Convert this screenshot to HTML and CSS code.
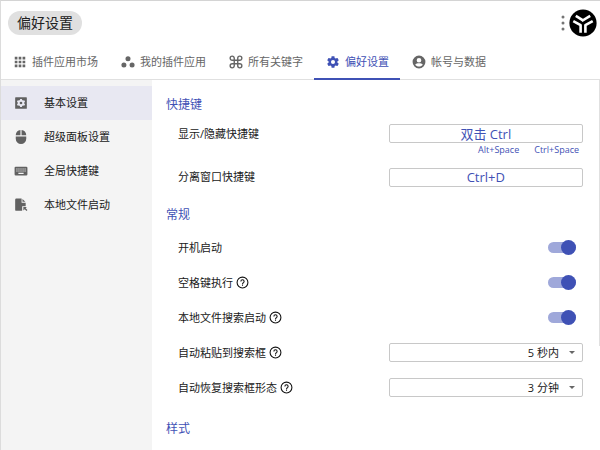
FILE: index.html
```html
<!DOCTYPE html>
<html lang="zh-CN">
<head>
  <meta charset="UTF-8" />
  <meta name="viewport" content="width=device-width, initial-scale=1.0" />
  <title>偏好设置</title>
  <link rel="stylesheet" href="styles.css">
</head>
<body>
  <header class="topbar">
    <h1 class="title">偏好设置</h1>
    <div class="topbar-right">
      <button class="more" aria-label="更多">
        <svg viewBox="0 0 4 16" width="4" height="16" fill="#757575"><circle cx="2" cy="2" r="1.5"/><circle cx="2" cy="8" r="1.5"/><circle cx="2" cy="14" r="1.5"/></svg>
      </button>
      <svg class="logo" viewBox="0 0 28 28" width="28" height="28">
        <circle cx="14" cy="14" r="13.6" fill="#000"/>
        <g stroke="#fff" stroke-width="2.6" fill="none" stroke-linejoin="round">
          <path d="M4.300 12.200L11.600 16.200V23.800"/>
          <path d="M6.800 6.800L14 11.300"/>
          <path d="M12.800 12L21.200 6.800"/>
          <path d="M23.700 12.200L16.400 16.200V23.800"/>
        </g>
      </svg>
    </div>
  </header>

  <nav class="tabs">
    <button class="tab">
      <svg class="icon" viewBox="0 0 24 24"><path d="M3 3h4.600v4.600H3zM9.700 3h4.600v4.600H9.700zM16.400 3H21v4.600h-4.600zM3 9.700h4.600v4.600H3zM9.700 9.700h4.600v4.600H9.700zM16.400 9.700H21v4.600h-4.600zM3 16.400h4.600V21H3zM9.700 16.400h4.600V21H9.700zM16.400 16.400H21V21h-4.600z"/></svg>
      插件应用市场
    </button>
    <button class="tab">
      <svg class="icon" viewBox="0 0 24 24"><circle cx="12" cy="6.500" r="4.300"/><circle cx="5" cy="17" r="4.300"/><circle cx="19" cy="17" r="4.300"/></svg>
      我的插件应用
    </button>
    <button class="tab">
      <svg class="icon" viewBox="0 0 24 24"><path fill="none" stroke="currentColor" stroke-width="2.400" d="M9 9h6v6H9zM9 9V5.500A3.500 3.500 0 1 0 5.500 9zM15 9h3.500A3.500 3.500 0 1 0 15 5.500zM15 15v3.500a3.500 3.500 0 1 0 3.500-3.500zM9 15H5.500A3.500 3.500 0 1 0 9 18.500z"/></svg>
      所有关键字
    </button>
    <button class="tab active">
      <svg class="icon" viewBox="0 0 24 24"><path d="M19.430 12.980c.040-.320.070-.640.070-.980s-.030-.660-.070-.980l2.110-1.650c.190-.150.240-.420.120-.640l-2-3.460c-.120-.220-.390-.300-.610-.220l-2.490 1c-.520-.400-1.080-.730-1.690-.980l-.380-2.650C14.460 2.180 14.250 2 14 2h-4c-.250 0-.460.180-.490.420l-.380 2.650c-.610.250-1.170.590-1.690.980l-2.490-1c-.230-.090-.490 0-.610.220l-2 3.460c-.130.220-.070.490.120.640l2.110 1.650c-.040.320-.070.650-.070.980s.030.660.070.980l-2.110 1.650c-.190.150-.240.420-.120.640l2 3.460c.120.220.390.300.610.220l2.490-1c.520.400 1.080.730 1.690.980l.380 2.650c.030.240.240.420.490.420h4c.250 0 .460-.180.490-.420l.380-2.650c.610-.250 1.170-.590 1.690-.980l2.490 1c.230.090.490 0 .610-.220l2-3.460c.120-.220.070-.490-.120-.640zM12 15.500a3.500 3.500 0 1 1 0-7 3.500 3.500 0 0 1 0 7z"/></svg>
      偏好设置
    </button>
    <button class="tab">
      <svg class="icon" viewBox="0 0 24 24"><path fill-rule="evenodd" d="M12 1a11 11 0 1 0 0 22 11 11 0 0 0 0-22zM12 5a4 4 0 1 1 0 8 4 4 0 0 1 0-8zM5.500 16.700C6.500 14.800 9.700 14.200 12 14.200s5.500.600 6.500 2.500C17 18.700 14.600 19.700 12 19.700s-5-1-6.500-3z"/></svg>
      帐号与数据
    </button>
  </nav>

  <div class="layout">
    <aside class="sidebar">
      <button class="side-item active">
        <svg class="icon" viewBox="0 0 24 24"><path fill-rule="evenodd" d="M3 2h18a1 1 0 0 1 1 1v18a1 1 0 0 1-1 1H3a1 1 0 0 1-1-1V3a1 1 0 0 1 1-1zM10.500 5l-.500 2-1.500.900-2-.600L5 9.900l1.500 1.400v1.400L5 14.100l1.500 2.600 2-.600 1.500.900.500 2h3l.500-2 1.500-.900 2 .600 1.500-2.600-1.500-1.400v-1.400L19 9.900l-1.500-2.600-2 .600L14 7l-.500-2z"/><circle cx="12" cy="12" r="2.300"/></svg>
        基本设置
      </button>
      <button class="side-item">
        <svg class="icon" viewBox="0 0 24 24"><path d="M11 .100C6.500.600 3 4 3 9h8zM13 .100V9h8c0-5-3.500-8.400-8-8.900zM3 11v4a9 9 0 0 0 18 0v-4z"/></svg>
        超级面板设置
      </button>
      <button class="side-item">
        <svg class="icon" viewBox="0 0 24 24"><path fill-rule="evenodd" d="M3 4.500h18a2 2 0 0 1 2 2v11a2 2 0 0 1-2 2H3a2 2 0 0 1-2-2v-11a2 2 0 0 1 2-2zM4 7.500v2h2v-2zM7.500 7.500v2h2v-2zM11 7.500v2h2v-2zM14.500 7.500v2h2v-2zM18 7.500v2h2v-2zM4 11v2h2v-2zM7.500 11v2h2v-2zM11 11v2h2v-2zM14.500 11v2h2v-2zM18 11v2h2v-2zM7.500 15v2h9v-2z"/></svg>
        全局快捷键
      </button>
      <button class="side-item">
        <svg class="icon" viewBox="0 0 24 24"><path d="M4 1h9v7h7v6h-6v8H4a2 2 0 0 1-2-2V3a2 2 0 0 1 2-2zM14.500 1.500l5 5h-5z"/><path d="M16 15.500h6l-2 2 3 3.200-1.500 1.500-3.200-3.100-2.300 2.400z"/></svg>
        本地文件启动
      </button>
    </aside>

    <main class="content">
      <section>
        <h2>快捷键</h2>
        <div class="row row-hotkey">
          <label for="toggleKey">显示/隐藏快捷键</label>
          <div class="field">
            <input class="hotkey" id="toggleKey" type="text" value="双击 Ctrl" readonly>
            <div class="hints">
              <button>Alt+Space</button>
              <button>Ctrl+Space</button>
            </div>
          </div>
        </div>
        <div class="row">
          <label for="detachKey">分离窗口快捷键</label>
          <div class="field">
            <input class="hotkey" id="detachKey" type="text" value="Ctrl+D" readonly>
          </div>
        </div>
      </section>

      <section>
        <h2>常规</h2>
        <div class="rows">
          <div class="row">
            <label for="autoStart">开机启动</label>
            <input class="switch" id="autoStart" type="checkbox" checked>
          </div>
          <div class="row">
            <label for="spaceRun">空格键执行</label>
            <button class="help" aria-label="帮助"><svg viewBox="0 0 24 24"><path d="M11 18h2v-2h-2zM12 1a11 11 0 1 0 0 22 11 11 0 0 0 0-22zm0 20a9 9 0 1 1 0-18 9 9 0 0 1 0 18zM12 6a4 4 0 0 0-4 4h2a2 2 0 1 1 4 0c0 2-3 1.750-3 5h2c0-2.250 3-2.500 3-5a4 4 0 0 0-4-4z"/></svg></button>
            <input class="switch" id="spaceRun" type="checkbox" checked>
          </div>
          <div class="row">
            <label for="fileSearch">本地文件搜索启动</label>
            <button class="help" aria-label="帮助"><svg viewBox="0 0 24 24"><path d="M11 18h2v-2h-2zM12 1a11 11 0 1 0 0 22 11 11 0 0 0 0-22zm0 20a9 9 0 1 1 0-18 9 9 0 0 1 0 18zM12 6a4 4 0 0 0-4 4h2a2 2 0 1 1 4 0c0 2-3 1.750-3 5h2c0-2.250 3-2.500 3-5a4 4 0 0 0-4-4z"/></svg></button>
            <input class="switch" id="fileSearch" type="checkbox" checked>
          </div>
          <div class="row">
            <label for="autoPaste">自动粘贴到搜索框</label>
            <button class="help" aria-label="帮助"><svg viewBox="0 0 24 24"><path d="M11 18h2v-2h-2zM12 1a11 11 0 1 0 0 22 11 11 0 0 0 0-22zm0 20a9 9 0 1 1 0-18 9 9 0 0 1 0 18zM12 6a4 4 0 0 0-4 4h2a2 2 0 1 1 4 0c0 2-3 1.750-3 5h2c0-2.250 3-2.500 3-5a4 4 0 0 0-4-4z"/></svg></button>
            <div class="field select">
              <select id="autoPaste"><option>5 秒内</option></select>
            </div>
          </div>
          <div class="row">
            <label for="autoReset">自动恢复搜索框形态</label>
            <button class="help" aria-label="帮助"><svg viewBox="0 0 24 24"><path d="M11 18h2v-2h-2zM12 1a11 11 0 1 0 0 22 11 11 0 0 0 0-22zm0 20a9 9 0 1 1 0-18 9 9 0 0 1 0 18zM12 6a4 4 0 0 0-4 4h2a2 2 0 1 1 4 0c0 2-3 1.750-3 5h2c0-2.250 3-2.500 3-5a4 4 0 0 0-4-4z"/></svg></button>
            <div class="field select">
              <select id="autoReset"><option>3 分钟</option></select>
            </div>
          </div>
        </div>
      </section>

      <section>
        <h2>样式</h2>
      </section>
    </main>
  </div>
</body>
</html>
```
FILE: styles.css
```css
:root {
  --primary: #3f51b5;
  --text: #202020;
  --muted: #666;
  --line: #e0e0e0;
}

* {
  box-sizing: border-box;
}

body {
  margin: 0;
  height: 100vh;
  overflow: hidden;
  display: flex;
  flex-direction: column;
  border-top: 1px solid #d4d4d4;
  border-left: 1px solid #dcdcdc;
  background: #fff;
  color: var(--text);
  font-family: "Open Sans", "Noto Sans CJK SC", sans-serif;
  font-size: 11px;
  line-height: 16px;
}

button,
input,
select {
  font: inherit;
  color: inherit;
  margin: 0;
}

button {
  border: none;
  background: none;
  padding: 0;
  cursor: pointer;
}

h1,
h2 {
  margin: 0;
  font-weight: normal;
}

.icon {
  width: 14px;
  height: 14px;
  flex: none;
  fill: currentColor;
}

.topbar {
  display: flex;
  justify-content: space-between;
  align-items: center;
  height: 44px;
  padding: 0 3px 0 7px;
}

.title {
  padding: 0 9px;
  border-radius: 12px;
  background: #e0e0e0;
  font-size: 14px;
  line-height: 24px;
}

.topbar-right {
  display: flex;
  align-items: center;
  gap: 4px;
}

.more,
.help {
  display: flex;
}

/* tabs */
.tabs {
  display: flex;
  flex: none;
  height: 35px;
  border-bottom: 1px solid var(--line);
}

.tab {
  display: flex;
  align-items: center;
  gap: 5px;
  height: 35px;
  padding: 0 11px 0 12px;
  border-bottom: 2px solid transparent;
  color: var(--muted);
  white-space: nowrap;
}

.tab.active {
  color: var(--primary);
  border-color: var(--primary);
}

.layout {
  display: flex;
  flex: 1;
  min-height: 0;
}

/* sidebar */
.sidebar {
  width: 151px;
  flex: none;
  padding-top: 6px;
  background: #f4f4f4;
}

.side-item {
  display: flex;
  align-items: center;
  gap: 16px;
  width: 100%;
  height: 34px;
  padding: 0 13px;
}

.side-item .icon {
  color: #616161;
}

.side-item.active {
  background: #e8e8f2;
}

/* settings */
.content {
  position: relative;
  flex: 1;
  padding: 13px 17px 0 14px;
  overflow: hidden;
}

.content::after {
  content: "";
  position: absolute;
  top: 0;
  right: 0;
  width: 1px;
  height: 72%;
  background: var(--line);
}

h2 {
  color: var(--primary);
  font-size: 12px;
  line-height: 24px;
}

section {
  margin-bottom: 8px;
}

.rows {
  padding: 3px 0 4px;
}

.row {
  display: flex;
  align-items: center;
  height: 35px;
  padding-left: 12px;
}

.row-hotkey {
  align-items: flex-start;
  height: 42px;
  padding-top: 7px;
}

.row-hotkey + .row {
  height: 36px;
}

.row-hotkey label {
  line-height: 19px;
}

.help {
  margin-left: 3px;
}

.help svg {
  width: 13px;
  height: 13px;
  fill: #111;
}

.field {
  width: 48%;
  margin-left: auto;
}

.hotkey,
.select select {
  display: block;
  width: 100%;
  height: 19px;
  border: 1px solid #c8c8c8;
  border-radius: 2px;
  background: #fff;
}

.hotkey {
  padding: 0;
  color: var(--primary);
  font-size: 13px;
  text-align: center;
}

.hints {
  display: flex;
  justify-content: flex-end;
  gap: 15px;
  padding-right: 4px;
  color: var(--primary);
  font-size: 9px;
  line-height: 13px;
}

.select {
  position: relative;
}

.select select {
  appearance: none;
  padding: 0 23px 0 8px;
  line-height: 17px;
  text-align-last: right;
}

.select::after {
  content: "";
  position: absolute;
  top: 8px;
  right: 8px;
  border: 3px solid transparent;
  border-top-color: #666;
  border-bottom: 0;
  pointer-events: none;
}

.switch {
  appearance: none;
  display: flex;
  align-items: center;
  width: 28px;
  height: 11px;
  margin: 0 7px 0 auto;
  border-radius: 6px;
  background: #bdbdbd;
  cursor: pointer;
}

.switch::before {
  content: "";
  width: 15px;
  height: 15px;
  flex: none;
  border-radius: 50%;
  background: #fafafa;
}

.switch:checked {
  justify-content: flex-end;
  background: #9fa8da;
}

.switch:checked::before {
  background: var(--primary);
}
```
